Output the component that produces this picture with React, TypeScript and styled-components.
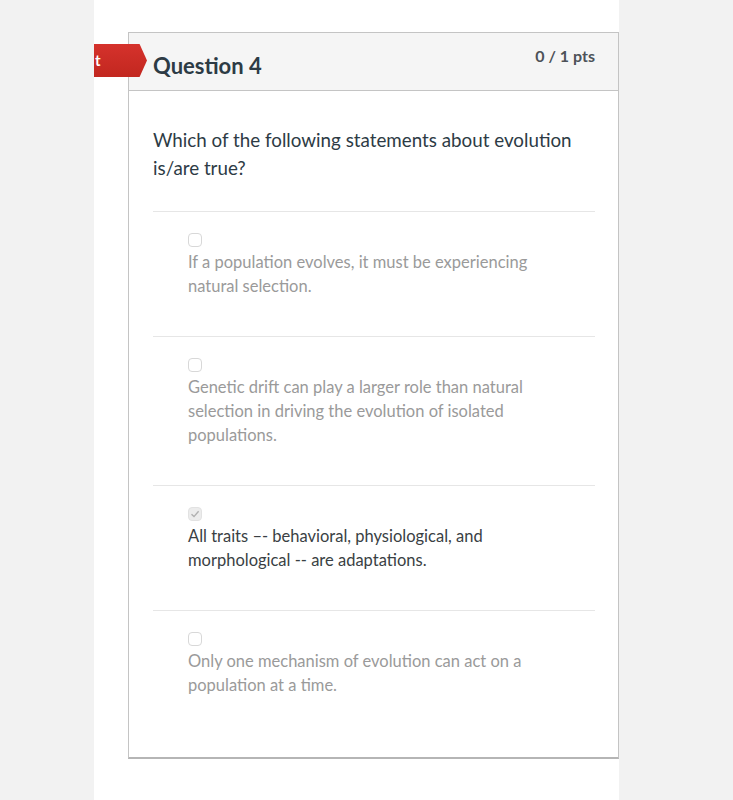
import React from "react";
import styled, { createGlobalStyle } from "styled-components";

const Global = createGlobalStyle`
  html, body { margin: 0; padding: 0; background: #f2f2f2; }
  body { font-family: Lato, "Liberation Sans", sans-serif; }
`;

const Page = styled.div`
  display: flex;
  min-height: 800px;
`;

const Column = styled.main`
  margin-left: 94px;
  width: 525px;
  background: #ffffff;
  min-height: 800px;
  padding: 32px 0 0 34px;
  box-sizing: border-box;
`;

const Card = styled.section`
  position: relative;
  width: 491px;
  height: 727px;
  box-sizing: border-box;
  border: 1px solid #c4c4c4;
  border-bottom: 2px solid #b5b5b5;
  background: #fff;
`;

const Flag = styled.div`
  position: absolute;
  left: -35px;
  top: 11px;
  width: 53px;
  height: 33px;
  background: linear-gradient(#d5322c, #c2271f);
  clip-path: polygon(0 0, 86% 0, 100% 50%, 86% 100%, 0 100%);
  color: #fff;
  font-weight: 700;
  font-size: 15px;
  line-height: 33px;
  padding-left: 1px;
  box-sizing: border-box;
`;

const Header = styled.header`
  display: flex;
  justify-content: space-between;
  align-items: flex-start;
  height: 58px;
  box-sizing: border-box;
  background: #f5f5f5;
  border-bottom: 1px solid #c4c4c4;
  padding: 0 23px 0 24px;
`;

const Title = styled.h2`
  margin: 0;
  padding-top: 20px;
  font-size: 22px;
  font-weight: 700;
  color: #2d3b45;
  line-height: 26px;
`;

const Points = styled.div`
  padding-top: 13px;
  font-size: 16px;
  font-weight: 700;
  color: #4d5258;
  line-height: 20px;
`;

const Body = styled.div`
  padding: 35px 23px 0 24px;
`;

const QuestionText = styled.p`
  margin: 0 0 29px;
  font-size: 18.8px;
  line-height: 28px;
  color: #2d3b45;
`;

const AnswerList = styled.div`
  display: flex;
  flex-direction: column;
`;

const Answer = styled.div`
  border-top: 1px solid #e6e6e6;
  padding: 21px 0 38px 35px;
  display: flex;
  flex-direction: column;
  gap: 3px;
`;

const Box = styled.span<{ $checked?: boolean }>`
  width: 14px;
  height: 14px;
  box-sizing: border-box;
  border: 1px solid ${(p) => (p.$checked ? "#e2e2e2" : "#d8d8d8")};
  border-radius: 4px;
  background: ${(p) => (p.$checked ? "#ececec" : "#fff")};
  display: flex;
  align-items: center;
  justify-content: center;
`;

const AnswerText = styled.div<{ $selected?: boolean }>`
  font-size: 16.5px;
  line-height: 24px;
  color: ${(p) => (p.$selected ? "#3a3f44" : "#9a9a9a")};
  max-width: 370px;
`;

const answers = [
  { text: "If a population evolves, it must be experiencing natural selection.", checked: false },
  {
    text: "Genetic drift can play a larger role than natural selection in driving the evolution of isolated populations.",
    checked: false,
  },
  { text: "All traits –- behavioral, physiological, and morphological -- are adaptations.", checked: true },
  { text: "Only one mechanism of evolution can act on a population at a time.", checked: false },
];

export default function App() {
  return (
    <>
      <Global />
      <Page>
        <Column>
          <Card>
            <Flag>t</Flag>
            <Header>
              <Title>Question 4</Title>
              <Points>0 / 1 pts</Points>
            </Header>
            <Body>
              <QuestionText>Which of the following statements about evolution is/are true?</QuestionText>
              <AnswerList>
                {answers.map((a, i) => (
                  <Answer key={i}>
                    <Box $checked={a.checked}>
                      {a.checked && (
                        <svg width="10" height="10" viewBox="0 0 10 10">
                          <path d="M1.5 5.2 L4 7.6 L8.6 2.2" fill="none" stroke="#b0b0b0" strokeWidth="1.4" />
                        </svg>
                      )}
                    </Box>
                    <AnswerText $selected={a.checked}>{a.text}</AnswerText>
                  </Answer>
                ))}
              </AnswerList>
            </Body>
          </Card>
        </Column>
      </Page>
    </>
  );
}
